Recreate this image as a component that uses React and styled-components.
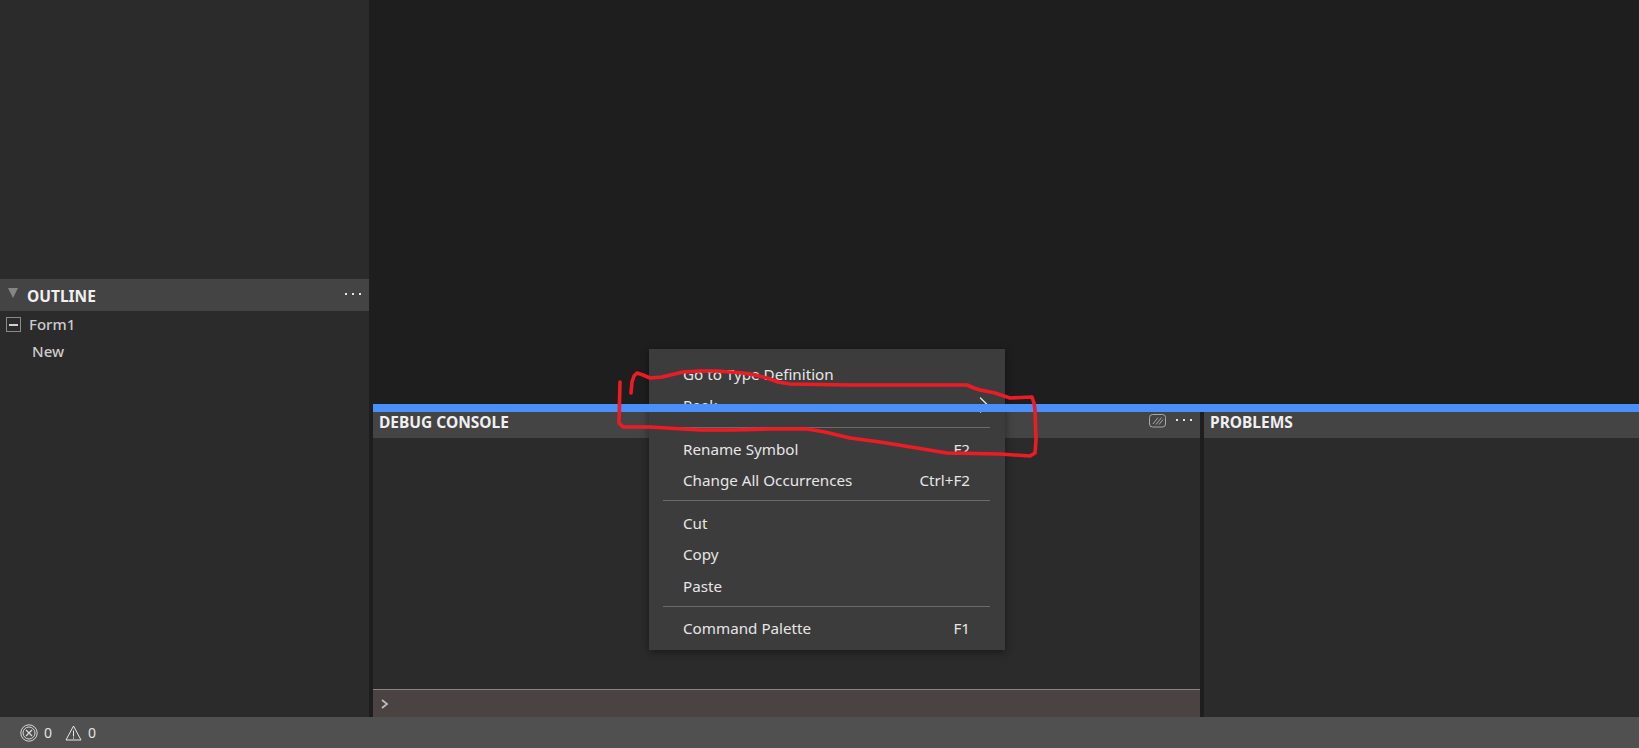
import React from "react";
import styled, { createGlobalStyle } from "styled-components";
import { ChevronRight } from "lucide-react";

const GlobalStyle = createGlobalStyle`
  html, body {
    margin: 0;
    padding: 0;
    background: #1e1e1e;
    overflow: hidden;
  }
`;

const Page = styled.div`
  position: relative;
  display: flex;
  flex-direction: column;
  width: 1639px;
  height: 748px;
  overflow: hidden;
  background: #1e1e1e;
  font-family: "Noto Sans", "Open Sans", sans-serif;
  color: #cccccc;
`;

const Workspace = styled.div`
  flex: 1;
  display: flex;
  min-height: 0;
  gap: 4px;
`;

const Sidebar = styled.aside`
  width: 369px;
  display: flex;
  flex-direction: column;
  background: #2b2b2b;
`;

const SidebarSpacer = styled.div`
  height: 279px;
`;

const SectionHeader = styled.div`
  box-sizing: border-box;
  display: flex;
  align-items: center;
  height: ${(props) => props.height}px;
  padding: ${(props) => props.padding};
  background: #444444;
  color: #f0f0f0;
  font-size: 15.5px;
  font-weight: 700;
`;

const Caret = styled.span`
  width: 0;
  height: 0;
  margin-left: 1px;
  margin-right: 9px;
  margin-top: -6px;
  border-left: 5.5px solid transparent;
  border-right: 5.5px solid transparent;
  border-top: 10px solid #858585;
`;

const HeaderTools = styled.div`
  margin-left: auto;
  margin-top: -2px;
  display: flex;
  align-items: center;
  gap: 10px;
`;

const Dots = styled.span`
  display: flex;
  gap: 5px;
  i {
    width: 2px;
    height: 2px;
    margin-top: -2px;
    background: #e8e8e8;
  }
`;

const TreeRow = styled.div`
  display: flex;
  align-items: center;
  gap: 8px;
  height: 27px;
  padding-left: ${(props) => props.indent}px;
  font-size: 15px;
  font-weight: 500;
`;

const TreeLabel = styled.span`
  margin-top: -2px;
`;

const CollapseBox = styled.span`
  box-sizing: border-box;
  display: flex;
  align-items: center;
  justify-content: center;
  width: 15px;
  height: 15px;
  border: 1px solid #8a8a8a;
  &::after {
    content: "";
    width: 9px;
    height: 2px;
    background: #d0d0d0;
  }
`;

const Main = styled.main`
  flex: 1;
  display: flex;
  flex-direction: column;
  min-width: 0;
`;

const Editor = styled.div`
  height: 404px;
`;

const Sash = styled.div`
  position: relative;
  z-index: 2;
  height: 8px;
  background: #4a8ffa;
`;

const Panels = styled.div`
  flex: 1;
  display: flex;
  gap: 4px;
  min-height: 0;
`;

const Panel = styled.section`
  display: flex;
  flex-direction: column;
  flex: ${(props) => (props.width ? `0 0 ${props.width}px` : 1)};
  background: #2b2b2b;
`;

const PanelBody = styled.div`
  flex: 1;
`;

const ConsoleInput = styled.div`
  box-sizing: border-box;
  display: flex;
  align-items: center;
  height: 28px;
  padding: 0 0 0 7px;
  background: #4a4342;
  border-top: 1px solid #8a8484;
`;

const StatusBar = styled.footer`
  display: flex;
  align-items: center;
  height: 31px;
  padding-left: 20px;
  background: #505050;
  font-size: 14px;
  color: #e4e4e4;
`;

const StatusItem = styled.span`
  display: flex;
  align-items: center;
  gap: 6px;
  margin-right: 13px;
`;

const Menu = styled.div`
  position: absolute;
  z-index: 1;
  left: 649px;
  top: 349px;
  width: 356px;
  height: 301px;
  box-sizing: border-box;
  padding-top: 9px;
  background: #3c3c3c;
  box-shadow: 0 2px 8px rgba(0, 0, 0, 0.45);
  font-size: 15.2px;
  color: #e6e6e6;
`;

const MenuItem = styled.div`
  display: flex;
  align-items: center;
  justify-content: space-between;
  height: 31.5px;
  padding: 0 35px 0 34px;
`;

const PeekArrow = styled(ChevronRight)`
  margin-right: -28px;
`;

const Separator = styled.div`
  height: 1px;
  margin: ${(props) => props.above}px 15px ${(props) => props.below}px 14px;
  background: #6b6b6b;
`;

const Scribble = styled.svg`
  position: absolute;
  z-index: 3;
  left: 0;
  top: 0;
  pointer-events: none;
`;

const DOT_KEYS = [0, 1, 2];

const MoreDots = () => (
  <Dots>
    {DOT_KEYS.map((key) => (
      <i key={key} />
    ))}
  </Dots>
);

const ClearIcon = () => (
  <svg width="17" height="14" viewBox="0 0 17 14" fill="none" stroke="#a8a8a8">
    <rect x="0.5" y="0.5" width="16" height="12.5" rx="3" />
    <path d="M4 10 9 3.5M7 10.5 12.5 3.5M10 10.5 14 5.5" />
  </svg>
);

const ErrorIcon = () => (
  <svg width="18" height="18" viewBox="0 0 18 18" fill="none" stroke="#d8d8d8">
    <circle cx="9" cy="9" r="8.2" />
    <circle cx="9" cy="9" r="6" />
    <path d="M6 6l6 6M12 6l-6 6" strokeWidth="1.3" />
  </svg>
);

const WarningIcon = () => (
  <svg width="17" height="16" viewBox="0 0 17 16" fill="none" stroke="#e8e8e8">
    <path d="M8.5 1 16 15H1Z" />
    <path d="M8.5 5.5v6M8.5 12.5v1.2" />
  </svg>
);

const PromptIcon = () => (
  <svg width="10" height="10" viewBox="0 0 10 10" fill="none" stroke="#b8bcc4" strokeWidth="1.8">
    <path d="M2 1l5 4-5 4" />
  </svg>
);

const scribblePath =
  "M631 393 L632 382 L634 376 L637 373 L643 375 L650 378 L662 377 L683 372 L700 371 L717 371 L743 373 L755 375 L767 378 L778 382 L790 384 L850 385 L967 385 L974 388 L980 390 L995 393 L1010 398 L1032 397 L1034 403 L1035 410 L1036 440 L1035 453 L1030 456 L1000 454 L947 453 L917 448 L880 442 L850 438 L825 432 L807 429 L770 429 L733 430 L700 430 L650 427 L623 427 L619 423 L620 382";

export default function App() {
  return (
    <Page>
      <GlobalStyle />
      <Workspace>
        <Sidebar>
          <SidebarSpacer />
          <SectionHeader height={32} padding="2px 8px 0 7px">
            <Caret />
            OUTLINE
            <HeaderTools>
              <MoreDots />
            </HeaderTools>
          </SectionHeader>
          <TreeRow indent={6}>
            <CollapseBox />
            <TreeLabel>Form1</TreeLabel>
          </TreeRow>
          <TreeRow indent={32}>
            <TreeLabel>New</TreeLabel>
          </TreeRow>
        </Sidebar>
        <Main>
          <Editor />
          <Sash />
          <Panels>
            <Panel width={827}>
              <SectionHeader height={26} padding="0 8px 6px 6px">
                DEBUG CONSOLE
                <HeaderTools>
                  <ClearIcon />
                  <MoreDots />
                </HeaderTools>
              </SectionHeader>
              <PanelBody />
              <ConsoleInput>
                <PromptIcon />
              </ConsoleInput>
            </Panel>
            <Panel>
              <SectionHeader height={26} padding="0 6px 6px">
                PROBLEMS
              </SectionHeader>
              <PanelBody />
            </Panel>
          </Panels>
        </Main>
      </Workspace>
      <StatusBar>
        <StatusItem>
          <ErrorIcon />0
        </StatusItem>
        <StatusItem>
          <WarningIcon />0
        </StatusItem>
      </StatusBar>
      <Menu>
        <MenuItem>Go to Type Definition</MenuItem>
        <MenuItem>
          Peek
          <PeekArrow size={28} strokeWidth={1.1} />
        </MenuItem>
        <Separator above={6} below={5} />
        <MenuItem>
          Rename Symbol<span>F2</span>
        </MenuItem>
        <MenuItem>
          Change All Occurrences<span>Ctrl+F2</span>
        </MenuItem>
        <Separator above={4} below={6} />
        <MenuItem>Cut</MenuItem>
        <MenuItem>Copy</MenuItem>
        <MenuItem>Paste</MenuItem>
        <Separator above={4} below={6} />
        <MenuItem>
          Command Palette<span>F1</span>
        </MenuItem>
      </Menu>
      <Scribble width="1639" height="748" viewBox="0 0 1639 748" fill="none">
        <path d={scribblePath} stroke="#ed1c24" strokeWidth="3.6" strokeLinejoin="round" strokeLinecap="round" />
      </Scribble>
    </Page>
  );
}
